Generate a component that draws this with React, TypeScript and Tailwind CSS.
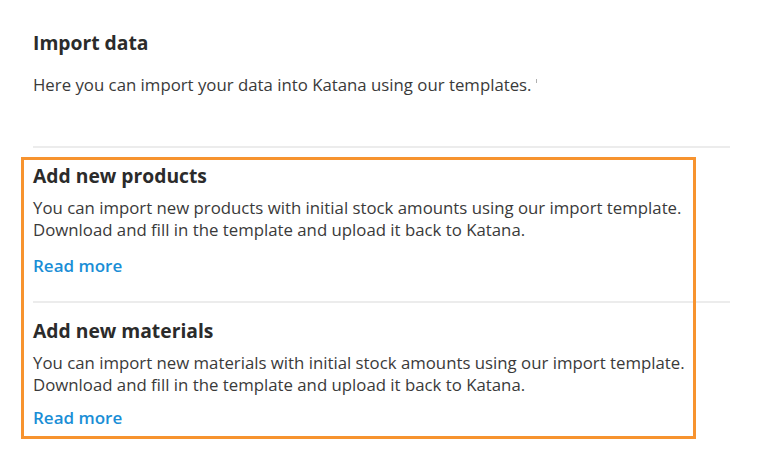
import React from "react";

const Section = ({ title, lines, gap }: { title: string; lines: string[]; gap: string }) => (
  <div className="pt-[14px]">
    <h2 className="text-[19.3px] leading-[28px] font-bold text-[#2b2b2b]">{title}</h2>
    <p className="mt-[7px] text-[16.8px] leading-[22px] text-[#3a3a3a] whitespace-nowrap">
      {lines[0]}
      <br />
      {lines[1]}
    </p>
    <a className={`${gap} block w-fit text-[17px] leading-[22px] font-semibold text-[#1a8ed6]`}>Read more</a>
  </div>
);

export default function App() {
  return (
    <div
      className="relative w-[768px] h-[464px] bg-white overflow-hidden"
      style={{ fontFamily: '"Open Sans", "Noto Sans", sans-serif' }}
    >
      <div className="pl-[33px] w-[730px] pt-[29px]">
        <h1 className="text-[19.3px] leading-[28px] font-bold text-[#2b2b2b]">Import data</h1>
        <p className="mt-[17px] text-[16.8px] leading-[22px] text-[#3a3a3a] whitespace-nowrap">
          Here you can import your data into Katana using our templates.
          <span className="ml-[4px] inline-block w-[1px] h-[4px] bg-[#b0b0b0] align-[8px]"></span>
        </p>
        <div className="mt-[50px] h-[2px] bg-[#ececec]"></div>
        <Section
          gap="mt-[14px]"
          title="Add new products"
          lines={[
            "You can import new products with initial stock amounts using our import template.",
            "Download and fill in the template and upload it back to Katana.",
          ]}
        />
        <div className="mt-[24px] h-[2px] bg-[#ececec]"></div>
        <Section
          gap="mt-[11px]"
          title="Add new materials"
          lines={[
            "You can import new materials with initial stock amounts using our import template.",
            "Download and fill in the template and upload it back to Katana.",
          ]}
        />
      </div>
      <div className="absolute left-[21px] top-[157px] w-[675px] h-[282px] border-[3px] border-[#f7932f] pointer-events-none"></div>
    </div>
  );
}
